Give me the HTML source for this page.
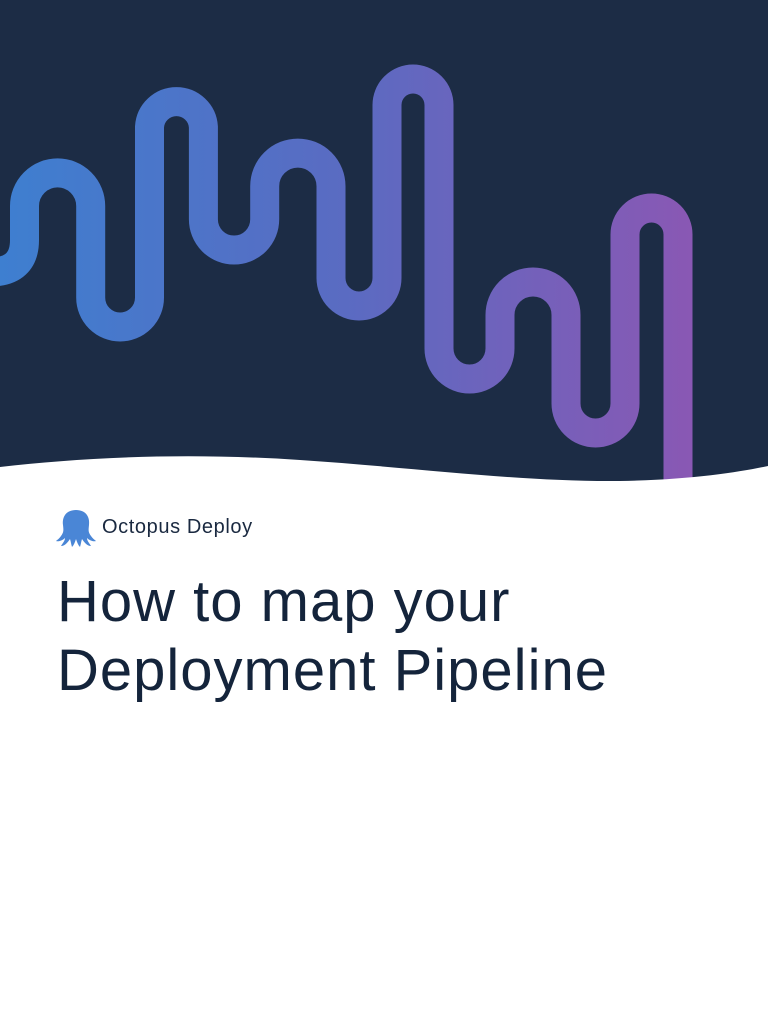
<!DOCTYPE html>
<html><head><meta charset="utf-8"><style>
html,body{margin:0;padding:0;background:#fff;}
body{width:768px;height:1024px;position:relative;overflow:hidden;font-family:"Liberation Sans",sans-serif;}
svg.top{position:absolute;left:0;top:0;}
.logo{position:absolute;left:56px;top:509px;}
.brand{position:absolute;left:102px;top:516px;font-size:20px;color:#1a2940;letter-spacing:0.6px;}
h1{position:absolute;left:57px;top:567px;margin:0;font-weight:normal;font-size:58px;line-height:69px;color:#14243b;letter-spacing:1.0px;}
</style></head><body>
<svg class="top" width="768" height="500" viewBox="0 0 768 500">
<defs><linearGradient id="g" gradientUnits="userSpaceOnUse" x1="0" y1="0" x2="690" y2="0">
<stop offset="0" stop-color="#3e7fd0"/><stop offset="0.5" stop-color="#5a6bc2"/><stop offset="1" stop-color="#8958b4"/></linearGradient></defs>
<rect width="768" height="500" fill="#1c2c45"/>
<path fill="none" stroke="url(#g)" stroke-width="29" d="M -10 272 Q 24.5 272 24.5 240 L 24.5 206 A 33.1 33.1 0 0 1 90.7 206 L 90.7 297.6 A 29.4 29.4 0 0 0 149.5 297.6 L 149.5 127 A 27 27 0 0 1 203.4 127 L 203.4 219.4 A 30.65 30.65 0 0 0 264.7 219.4 L 264.7 186.2 A 33.15 33.15 0 0 1 331 186.2 L 331 278 A 28 28 0 0 0 387 278 L 387 105 A 26 26 0 0 1 439 105 L 439 348.5 A 30.5 30.5 0 0 0 500 348.5 L 500 315 A 33 33 0 0 1 566 315 L 566 403.5 A 29.5 29.5 0 0 0 625 403.5 L 625 234.5 A 26.5 26.5 0 0 1 678 234.5 L 678 495"/>
<path fill="#fff" d="M0 467 C 80 458, 180 452, 300 460 C 420 468, 520 482, 620 481 C 690 480, 740 472, 768 466 L768 500 L0 500 Z"/>
</svg>
<svg class="logo" width="40" height="38" viewBox="0 0 40 38">
<path fill="#4a86d6" d="M20 1 C 10 1 6 8 7 16 C 7.5 21 8 23 5 27 C 3 30 1 31 0 32 C 3 33 7 31 9 29 C 9 32 6 35 5 37 C 9 37 12 33 14 30 C 15 33 15 35 16 38 C 18 36 19 33 20 30 C 21 33 22 36 24 38 C 25 35 25 33 26 30 C 28 33 31 37 35 37 C 34 35 31 32 31 29 C 33 31 37 33 40 32 C 39 31 37 30 35 27 C 32 23 32.5 21 33 16 C 34 8 30 1 20 1 Z"/>
</svg>
<div class="brand">Octopus Deploy</div>
<h1>How to map your<br>Deployment Pipeline</h1>
</body></html>
